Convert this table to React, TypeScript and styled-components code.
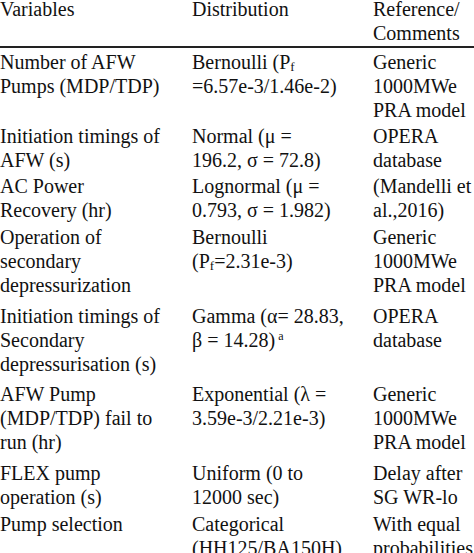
import React from "react";
import styled, { createGlobalStyle } from "styled-components";

const GlobalStyle = createGlobalStyle`
  html, body {
    margin: 0;
    padding: 0;
    background: #fff;
    overflow: hidden;
  }
  body {
    font-family: "Liberation Serif", "Times New Roman", serif;
    color: #111;
  }
`;

const Table = styled.div`
  width: 474px;
  margin-top: -3px;
  font-size: 20px;
  line-height: 24px;
  white-space: nowrap;
`;

const Row = styled.div<{ $gap?: number }>`
  display: grid;
  grid-template-columns: 192px 181px 1fr;
  padding-top: ${(p) => p.$gap ?? 0}px;
`;

const Cell = styled.div`
  overflow: visible;
`;

const Rule = styled.div`
  height: 2px;
  background: #222;
  margin: 1px 0 0;
`;

const Sub = styled.sub`
  font-size: 13px;
  line-height: 0;
  vertical-align: -2px;
`;

const Sup = styled.sup`
  font-size: 12px;
  line-height: 0;
  vertical-align: 7px;
  margin-left: 3px;
`;

type Line = React.ReactNode;

interface TableRow {
  variable: Line[];
  distribution: Line[];
  comment: Line[];
  gap: number;
}

const rows: TableRow[] = [
  {
    variable: ["Number of AFW", "Pumps (MDP/TDP)"],
    distribution: [<>Bernoulli (P<Sub>f</Sub></>, "=6.57e-3/1.46e-2)"],
    comment: ["Generic", "1000MWe", "PRA model"],
    gap: 2,
  },
  {
    variable: ["Initiation timings of", "AFW (s)"],
    distribution: ["Normal (μ =", "196.2, σ = 72.8)"],
    comment: ["OPERA", "database"],
    gap: 2,
  },
  {
    variable: ["AC Power", "Recovery (hr)"],
    distribution: ["Lognormal (μ =", "0.793, σ = 1.982)"],
    comment: ["(Mandelli et", "al.,2016)"],
    gap: 2,
  },
  {
    variable: ["Operation of", "secondary", "depressurization"],
    distribution: ["Bernoulli", <>(P<Sub>f</Sub>=2.31e-3)</>],
    comment: ["Generic", "1000MWe", "PRA model"],
    gap: 3,
  },
  {
    variable: ["Initiation timings of", "Secondary", "depressurisation (s)"],
    distribution: ["Gamma (α= 28.83,", <>β = 14.28)<Sup>a</Sup></>],
    comment: ["OPERA", "database"],
    gap: 7,
  },
  {
    variable: ["AFW Pump", "(MDP/TDP) fail to", "run (hr)"],
    distribution: ["Exponential (λ =", "3.59e-3/2.21e-3)"],
    comment: ["Generic", "1000MWe", "PRA model"],
    gap: 6,
  },
  {
    variable: ["FLEX pump", "operation (s)"],
    distribution: ["Uniform (0 to", "12000 sec)"],
    comment: ["Delay after", "SG WR-lo"],
    gap: 7,
  },
  {
    variable: ["Pump selection"],
    distribution: ["Categorical", "(HH125/BA150H)"],
    comment: ["With equal", "probabilities"],
    gap: 3,
  },
];

function Lines({ lines }: { lines: Line[] }) {
  return (
    <Cell>
      {lines.map((l, i) => (
        <div key={i}>{l}</div>
      ))}
    </Cell>
  );
}

export default function App() {
  return (
    <>
      <GlobalStyle />
      <Table>
        <Row>
          <Lines lines={["Variables"]} />
          <Lines lines={["Distribution"]} />
          <Lines lines={["Reference/", "Comments"]} />
        </Row>
        <Rule />
        {rows.map((r, i) => (
          <Row key={i} $gap={r.gap}>
            <Lines lines={r.variable} />
            <Lines lines={r.distribution} />
            <Lines lines={r.comment} />
          </Row>
        ))}
      </Table>
    </>
  );
}
